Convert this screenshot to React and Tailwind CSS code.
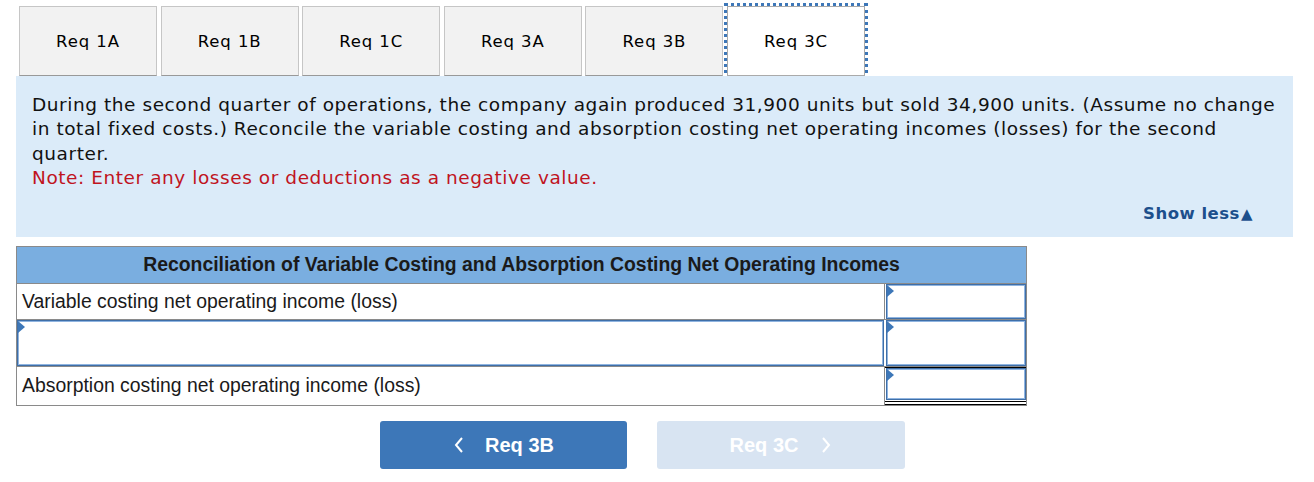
const tabs = ['Req 1A', 'Req 1B', 'Req 1C', 'Req 3A', 'Req 3B', 'Req 3C'];

function Arrow() {
  return (
    <span className="absolute left-0 top-0 w-0 h-0 border-y-[6px] border-y-transparent border-l-[7px] border-l-[#3d77b8]" />
  );
}

function InputCell({ className = '' }) {
  return (
    <div className={`relative h-full border border-[#3f6fa8] outline outline-1 outline-[#8fb4e0] -outline-offset-2 bg-white ${className}`}>
      <Arrow />
    </div>
  );
}

export default function App() {
  return (
    <div className="w-[1314px] h-[482px] bg-white pt-[6px] pl-[16px]" style={{ fontFamily: 'Verdana, "DejaVu Sans", sans-serif' }}>
      {/* Tabs */}
      <div className="flex pl-[3px] gap-[3.6px] h-[70px]">
        {tabs.map((t) => {
          const active = t === 'Req 3C';
          return (
            <div
              key={t}
              className={`w-[138px] h-full flex items-center justify-center pt-[2px] text-[16.5px] tracking-[0.9px] text-black ${
                active
                  ? 'bg-white border border-[#aaa] outline-[3px] outline-dotted outline-[#3d77b8] outline-offset-0'
                  : 'bg-[#f2f2f2] border border-[#c6c6c6] border-b-[#999]'
              }`}
            >
              {t}
            </div>
          );
        })}
      </div>

      {/* Instruction panel */}
      <div className="w-[1277px] h-[161px] bg-[#dbebf9] pl-[16px] pr-[8px] pt-[17px] relative">
        <p className="text-[18.5px] leading-[24.4px] tracking-[0.56px] text-[#111]">
          During the second quarter of operations, the company again produced 31,900 units but sold 34,900 units. (Assume no change in total fixed costs.) Reconcile the variable costing and absorption costing net operating incomes (losses) for the second quarter.
        </p>
        <p className="text-[18.5px] leading-[24.4px] tracking-[0.56px] text-[#c0141e]">Note: Enter any losses or deductions as a negative value.</p>
        <div className="absolute right-[40px] top-[126px] text-[16.5px] tracking-[0.5px] font-bold text-[#1c4f8c] flex items-center">
          Show less<span className="text-[15px] ml-[1px]">▲</span>
        </div>
      </div>

      {/* Table */}
      <div className="mt-[9px] w-[1011px] border border-[#8a8a8a]" style={{ fontFamily: '"Liberation Sans", Arial, sans-serif' }}>
        <div className="h-[37px] bg-[#7aaee0] flex items-center justify-center font-bold text-[19.4px] text-[#1a1a1a] border-b border-[#8a8a8a]">
          Reconciliation of Variable Costing and Absorption Costing Net Operating Incomes
        </div>
        <div className="flex h-[36px] border-b border-[#8a8a8a]">
          <div className="w-[868px] flex items-center pl-[5px] text-[19.4px] text-[#1a1a1a] border-r border-[#8a8a8a]">
            Variable costing net operating income (loss)
          </div>
          <div className="flex-1 pl-[1px]">
            <InputCell />
          </div>
        </div>
        <div className="flex h-[47px] border-b border-[#8a8a8a]">
          <div className="w-[868px] pr-[1px]">
            <InputCell />
          </div>
          <div className="flex-1 pl-[1px]">
            <InputCell />
          </div>
        </div>
        <div className="flex h-[38px]">
          <div className="w-[868px] flex items-center pl-[5px] text-[19.4px] text-[#1a1a1a] border-r border-[#8a8a8a]">
            Absorption costing net operating income (loss)
          </div>
          <div className="flex-1 flex flex-col border-t border-black">
            <div className="flex-1 pl-[1px]">
              <InputCell />
            </div>
            <div className="h-[4px] border-t border-b border-black mt-[1px]" />
          </div>
        </div>
      </div>

      {/* Nav buttons */}
      <div className="flex gap-[30px] ml-[364px] mt-[15px]" style={{ fontFamily: '"Liberation Sans", Arial, sans-serif' }}>
        <button className="w-[247px] h-[48px] rounded-[3px] bg-[#3d77b8] text-white font-bold text-[20px] flex items-center justify-center">
          <svg width="12" height="18" viewBox="0 0 12 18" className="mr-[20px]" fill="none" stroke="white" strokeWidth="2">
            <path d="M9 2 L3 9 L9 16" />
          </svg>
          Req 3B
        </button>
        <button className="w-[248px] h-[48px] rounded-[3px] bg-[#d8e4f2] text-white font-bold text-[20px] flex items-center justify-center">
          Req 3C
          <svg width="12" height="18" viewBox="0 0 12 18" className="ml-[22px]" fill="none" stroke="white" strokeWidth="2">
            <path d="M3 2 L9 9 L3 16" />
          </svg>
        </button>
      </div>
    </div>
  );
}
